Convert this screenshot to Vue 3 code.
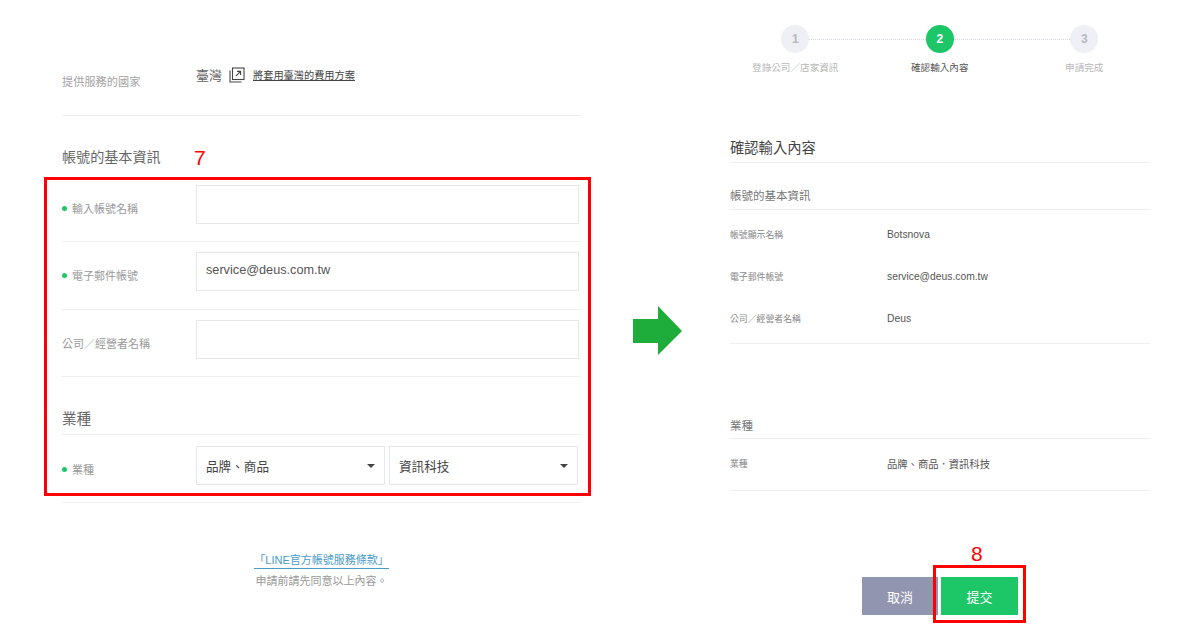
<template>
  <div class="page">
    <!-- left: application form -->
    <section class="form">
      <div class="country">
        <span class="country__label">提供服務的國家</span>
        <div class="country__value">
          <span class="country__name">臺灣</span>
          <svg class="country__icon" width="16" height="16" viewBox="0 0 16 16" fill="none" stroke="#444" stroke-width="1.1">
            <path d="M1 3.5V15H12.5" />
            <rect x="3.5" y="1" width="11.5" height="11.5" />
            <path d="M6.8 9.2L11.4 4.6M8 4.4H11.6V8" />
          </svg>
          <a class="country__link">將套用臺灣的費用方案</a>
        </div>
      </div>

      <div class="form__head">
        <h2 class="form__title">帳號的基本資訊</h2>
        <span class="mark mark--seven">7</span>
      </div>

      <div class="form__fields">
        <div class="field field--first">
          <label class="field__label"><i class="dot" />輸入帳號名稱</label>
          <div class="field__box" />
        </div>
        <div class="field">
          <label class="field__label"><i class="dot" />電子郵件帳號</label>
          <div class="field__box">service@deus.com.tw</div>
        </div>
        <div class="field field--third">
          <label class="field__label">公司／經營者名稱</label>
          <div class="field__box" />
        </div>

        <h2 class="form__sub">業種</h2>

        <div class="field field--select">
          <label class="field__label"><i class="dot" />業種</label>
          <div class="selects">
            <div class="select">品牌、商品<i class="caret" /></div>
            <div class="select">資訊科技<i class="caret" /></div>
          </div>
        </div>
        <div class="highlight highlight--form" />
      </div>

      <div class="terms">
        <a class="terms__link">「LINE官方帳號服務條款」</a>
        <p class="terms__note">申請前請先同意以上內容。</p>
      </div>
    </section>

    <div class="arrow">
      <svg width="50" height="50" viewBox="0 0 50 50">
        <path d="M0 13H25V0L49 25L25 49V37H0Z" fill="#1ead3a" />
      </svg>
    </div>

    <!-- right: confirmation step -->
    <section class="confirm">
      <ol class="steps">
        <li v-for="(s, i) in steps" :key="s" class="step" :class="{ 'step--on': i === 1 }">
          <span class="step__num">{{ i + 1 }}</span>
          <span class="step__text">{{ s }}</span>
        </li>
      </ol>

      <h2 class="confirm__title">確認輸入內容</h2>
      <h3 class="confirm__sub">帳號的基本資訊</h3>
      <dl class="info">
        <div v-for="r in account" :key="r[0]" class="info__row">
          <dt>{{ r[0] }}</dt>
          <dd>{{ r[1] }}</dd>
        </div>
      </dl>

      <h3 class="confirm__sub confirm__sub--gap">業種</h3>
      <dl class="info info--last">
        <div class="info__row">
          <dt>業種</dt>
          <dd>品牌、商品．資訊科技</dd>
        </div>
      </dl>

      <div class="actions">
        <button class="btn btn--cancel">取消</button>
        <button class="btn btn--submit">提交</button>
        <div class="highlight highlight--submit" />
        <span class="mark mark--eight">8</span>
      </div>
    </section>
  </div>
</template>

<script setup>
const steps = ['登錄公司／店家資訊', '確認輸入內容', '申請完成']

const account = [
  ['帳號顯示名稱', 'Botsnova'],
  ['電子郵件帳號', 'service@deus.com.tw'],
  ['公司／經營者名稱', 'Deus'],
]
</script>

<style>
html, body { background: #fff; }
</style>

<style scoped>
.page {
  width: 1200px;
  height: 626px;
  overflow: hidden;
  display: flex;
  background: #fff;
  font-family: "Liberation Sans", "Noto Sans CJK TC", sans-serif;
  color: #555;
}

/* left form */
.form {
  width: 519px;
  margin-left: 62px;
  flex-shrink: 0;
}

.country {
  height: 116px;
  box-sizing: border-box;
  padding-top: 66px;
  border-bottom: 1px solid #f0f0f2;
  display: flex;
}
.country__label {
  width: 134px;
  padding-top: 8px;
  font-size: 11.2px;
  line-height: 16px;
  color: #a3a3a3;
}
.country__value {
  display: flex;
  align-items: flex-start;
  height: 20px;
}
.country__name { font-size: 13px; line-height: 20px; color: #666; }
.country__icon { margin: 1px 0 0 7px; }
.country__link {
  margin: 2px 0 0 8px;
  font-size: 10.2px;
  line-height: 16px;
  color: #444;
  text-decoration: underline;
}

.form__head {
  display: flex;
  align-items: center;
  height: 24px;
  margin-top: 28px;
  position: relative;
}
.form__title { margin: 0; font-size: 14.1px; font-weight: 400; color: #666; }

.mark {
  position: absolute;
  font-size: 21px;
  line-height: 24px;
  color: #f00;
}
.mark--seven { left: 132px; top: 2px; }

.form__fields {
  position: relative;
  margin-top: 5px;
}

.field {
  display: flex;
  align-items: flex-start;
  height: 68px;
  box-sizing: border-box;
  padding-top: 10px;
  border-bottom: 1px solid #f0f0f2;
}
.field--first { height: 69px; padding-top: 12px; }
.field--third { height: 67px; }
.field--select { padding-top: 11px; }
.field__label {
  width: 134px;
  height: 39px;
  box-sizing: border-box;
  padding-top: 7px;
  flex-shrink: 0;
  display: flex;
  align-items: center;
  font-size: 11px;
  color: #999;
}
.dot {
  width: 5px;
  height: 5px;
  margin-right: 5px;
  border-radius: 50%;
  background: #1dc768;
}
.field__box {
  width: 383px;
  height: 39px;
  box-sizing: border-box;
  padding: 0 9px;
  border: 1px solid #e6e7eb;
  font-size: 12.7px;
  line-height: 35px;
  color: #555;
}

.form__sub {
  height: 58px;
  box-sizing: border-box;
  margin: 0;
  padding-top: 33px;
  font-size: 14.5px;
  line-height: 18px;
  font-weight: 400;
  color: #666;
  border-bottom: 1px solid #f0f0f2;
}

.selects { display: flex; gap: 4px; }
.select {
  width: 189px;
  height: 39px;
  box-sizing: border-box;
  padding: 0 9px;
  border: 1px solid #e6e7eb;
  display: flex;
  align-items: center;
  justify-content: space-between;
  font-size: 12.6px;
  color: #444;
}
.caret {
  width: 0;
  height: 0;
  border: 4px solid transparent;
  border-top: 4px solid #444;
  border-bottom: 0;
}

.highlight {
  position: absolute;
  box-sizing: border-box;
  border: 3px solid #f00;
  pointer-events: none;
}
.highlight--form {
  left: -18px;
  top: 4px;
  width: 547px;
  height: 319px;
}

.terms {
  margin-top: 50px;
  text-align: center;
  font-size: 11px;
}
.terms__link {
  display: inline-block;
  color: #4a9bc9;
  line-height: 15px;
  border-bottom: 1px solid #4a9bc9;
}
.terms__note { margin: 4px 0 0; line-height: 16px; color: #999; }

.arrow {
  width: 50px;
  margin: 306px 0 0 52px;
  flex-shrink: 0;
}

/* right confirmation */
.confirm {
  width: 420px;
  margin-left: 47px;
  flex-shrink: 0;
}

.steps {
  list-style: none;
  margin: 0 0 0 -7px;
  padding: 25px 0 0;
  display: flex;
  height: 137px;
  box-sizing: border-box;
  position: relative;
}
.steps::before {
  content: "";
  position: absolute;
  left: 72px;
  width: 289px;
  top: 39px;
  border-top: 1px dotted #d5d8df;
}
.step {
  width: 144.5px;
  flex-shrink: 0;
  display: flex;
  flex-direction: column;
  align-items: center;
  position: relative;
  font-size: 9.6px;
  color: #b7b7b7;
}
.step__num {
  width: 28px;
  height: 28px;
  border-radius: 50%;
  background: #eef0f5;
  color: #b5b8bf;
  font-size: 12px;
  font-weight: 700;
  line-height: 28px;
  text-align: center;
}
.step__text { margin-top: 8px; line-height: 14px; white-space: nowrap; }
.step--on { color: #555; }
.step--on .step__num { background: #1dc768; color: #fff; }

.confirm__title {
  margin: 0;
  height: 26px;
  box-sizing: border-box;
  padding-top: 1px;
  font-size: 14.3px;
  line-height: 20px;
  font-weight: 400;
  color: #444;
  border-bottom: 1px solid #eee;
  font-family: "Liberation Serif", "Noto Sans CJK TC", serif;
}
.confirm__sub {
  margin: 0;
  padding-top: 25px;
  height: 21px;
  font-size: 11.5px;
  line-height: 16px;
  font-weight: 400;
  color: #777;
  border-bottom: 1px solid #eee;
}
.confirm__sub--gap { padding-top: 74px; height: 20px; }

.info {
  margin: 0;
  padding: 4px 0 3px;
  border-bottom: 1px solid #eee;
}
.info__row {
  display: flex;
  align-items: center;
  height: 42px;
}
.info__row dt { width: 157px; padding-bottom: 2px; font-size: 8.9px; color: #888; }
.info__row dd { margin: 0; padding-bottom: 1px; font-size: 10.3px; color: #555; }
.info--last { padding-bottom: 5px; }

.actions {
  display: flex;
  gap: 3px;
  margin: 86px 0 0 132px;
  position: relative;
}
.btn {
  width: 76px;
  height: 38px;
  border: 0;
  padding: 0;
  font-family: inherit;
  font-size: 13px;
  color: #fff;
}
.btn--cancel { background: #9195b0; }
.btn--submit { width: 77px; background: #1dc768; }
.highlight--submit {
  left: 71px;
  top: -12px;
  width: 93px;
  height: 58px;
}
.mark--eight { left: 109px; top: -35px; }
</style>
